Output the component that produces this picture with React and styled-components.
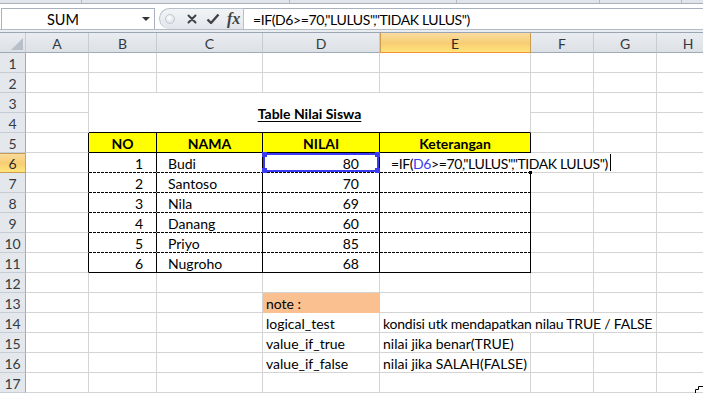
import styled, { createGlobalStyle, css } from "styled-components";

const GlobalStyle = createGlobalStyle`
  html, body {
    margin: 0;
    padding: 0;
    background: #fff;
  }
  body {
    font-family: Lato, "Liberation Sans", sans-serif;
    overflow: hidden;
  }
`;

const COLUMNS = [
  { key: "A", width: 63 },
  { key: "B", width: 68 },
  { key: "C", width: 106 },
  { key: "D", width: 117 },
  { key: "E", width: 151 },
  { key: "F", width: 63 },
  { key: "G", width: 63 },
  { key: "H", width: 63 },
];

const ROW_COUNT = 17;

const students = [
  { no: 1, name: "Budi", score: 80 },
  { no: 2, name: "Santoso", score: 70 },
  { no: 3, name: "Nila", score: 69 },
  { no: 4, name: "Danang", score: 60 },
  { no: 5, name: "Priyo", score: 85 },
  { no: 6, name: "Nugroho", score: 68 },
];

const notes = [
  ["logical_test", "kondisi utk mendapatkan nilau TRUE / FALSE"],
  ["value_if_true", "nilai jika benar(TRUE)"],
  ["value_if_false", "nilai jika SALAH(FALSE)"],
];

const ribbonGroups = [82, 208, 167, 143, 82, 30];

const GRID = "#d4d4d4";
const NOTE_FILL = "#fac090";

// works out borders, text and fill for every cell of a row
function cellsFor(row) {
  let cells = COLUMNS.map((col) => ({
    key: col.key + row,
    right: "grid",
    bottom: "grid",
  }));

  if (row >= 5 && row <= 11) {
    cells[0].right = "solid";
    for (let c = 1; c <= 4; c++) {
      cells[c].right = "solid";
      cells[c].bottom = row === 5 || row === 11 ? "solid" : "dashed";
    }
  }

  if (row === 5) {
    ["NO", "NAMA", "NILAI", "Keterangan"].forEach((label, i) => {
      Object.assign(cells[i + 1], { text: label, align: "center", bold: true, bg: "#ffff00" });
    });
  }

  const student = students[row - 6];
  if (student) {
    Object.assign(cells[1], { text: student.no, align: "right", padR: 13 });
    Object.assign(cells[2], { text: student.name, padL: 11 });
    Object.assign(cells[3], { text: student.score, align: "right", padR: 20 });
  }

  if (row === 6) {
    cells[3].selected = true;
    cells[4].editing = true;
  }

  if (row === 13) {
    Object.assign(cells[3], { text: "note :", bg: NOTE_FILL, right: "fill", bottom: "fill" });
  }

  const note = notes[row - 14];
  if (note) {
    cells[3].text = note[0];
    cells[4].text = note[1];
  }
  if (row === 14) {
    cells[4].right = "hidden";
    cells[4].tight = true;
    cells[5].right = "hidden";
  }

  if (row === 3) {
    cells.splice(1, 4, {
      key: "B3",
      title: true,
      colSpan: 4,
      rowSpan: 2,
      right: "grid",
      bottom: "solid",
    });
  }
  if (row === 4) cells.splice(1, 4);

  return cells;
}

function lineColor(kind, bg) {
  if (kind === "solid") return "#000";
  if (kind === "fill") return bg;
  if (kind === "hidden" || kind === "dashed") return "transparent";
  return GRID;
}

function XIcon() {
  return (
    <svg width="10" height="10" viewBox="0 0 10 10">
      <path d="M1.5 1.5 L8.5 8.5 M8.5 1.5 L1.5 8.5" stroke="#3f4246" strokeWidth="2" strokeLinecap="round" />
    </svg>
  );
}

function CheckIcon() {
  return (
    <svg width="14" height="12" viewBox="0 0 14 12">
      <path d="M1.5 6.5 L5 10 L12.5 1.5" stroke="#3f4246" strokeWidth="2.4" fill="none" strokeLinejoin="round" />
    </svg>
  );
}

function CornerTriangle() {
  return (
    <svg width="12" height="12" viewBox="0 0 12 12">
      <polygon points="12,0 12,12 0,12" fill="#b9bfc8" />
    </svg>
  );
}

function PointerCorner() {
  return (
    <svg width="8" height="8" viewBox="0 0 8 8">
      <path d="M0.5 8 V4.5 H3.5 V1.5 H8" stroke="#000" strokeWidth="1" fill="none" />
    </svg>
  );
}

function CellContent({ cell }) {
  if (cell.title) return <Title>Table Nilai Siswa</Title>;
  if (cell.editing) {
    return (
      <EditText>
        =IF(<RefText>D6</RefText>&gt;=70,"LULUS","TIDAK LULUS")
        <Caret />
      </EditText>
    );
  }
  return cell.text ?? null;
}

export default function App() {
  const rows = Array.from({ length: ROW_COUNT }, (_, i) => i + 1);

  return (
    <>
      <GlobalStyle />
      <Window>
        <Ribbon>
          {ribbonGroups.map((w, i) => (
            <RibbonGroup key={i} $w={w} />
          ))}
        </Ribbon>

        <FormulaBar>
          <NameBox>
            <NameText>SUM</NameText>
            <DropArrow />
          </NameBox>
          <Tools>
            <Grip />
            <ToolButton $w={20}>
              <XIcon />
            </ToolButton>
            <ToolButton $w={22}>
              <CheckIcon />
            </ToolButton>
            <Fx>fx</Fx>
          </Tools>
          <FormulaInput>=IF(D6&gt;=70,"LULUS","TIDAK LULUS")</FormulaInput>
        </FormulaBar>
        <Splitter />

        <Sheet>
          <Corner>
            <CornerTriangle />
          </Corner>
          {COLUMNS.map((col) => (
            <ColHead key={col.key} $active={col.key === "E"}>
              {col.key}
            </ColHead>
          ))}

          {rows.map((row) => [
            <RowHead key={"h" + row} $active={row === 6}>
              {row}
            </RowHead>,
            ...cellsFor(row).map((cell) => (
              <Cell
                key={cell.key}
                $align={cell.align}
                $bold={cell.bold}
                $bg={cell.bg}
                $padL={cell.padL}
                $padR={cell.padR}
                $right={cell.right}
                $bottom={cell.bottom}
                $colSpan={cell.colSpan}
                $rowSpan={cell.rowSpan}
                $middle={cell.title}
                $tight={cell.tight}
              >
                <CellContent cell={cell} />
                {cell.selected && (
                  <RefBox>
                    <Handle $v="top" $h="left" />
                    <Handle $v="top" $h="right" />
                    <Handle $v="bottom" $h="left" />
                    <Handle $v="bottom" $h="right" />
                  </RefBox>
                )}
                {cell.editing && <FillHandle />}
              </Cell>
            )),
          ])}
        </Sheet>

        <Pointer>
          <PointerCorner />
        </Pointer>
      </Window>
    </>
  );
}

const Window = styled.div`
  position: relative;
  width: 703px;
  height: 393px;
  overflow: hidden;
  background: #fff;
  font-size: 14px;
  color: #000;
`;

const Ribbon = styled.div`
  box-sizing: border-box;
  display: flex;
  height: 4px;
  background: #e1e5ea;
  border-bottom: 1px solid #a9b1bb;
`;

const RibbonGroup = styled.div`
  box-sizing: border-box;
  flex: 0 0 ${({ $w }) => $w}px;
  border-right: 1px solid #b7bec7;
`;

const FormulaBar = styled.div`
  box-sizing: border-box;
  display: flex;
  align-items: stretch;
  height: 26px;
  padding: 4px 0 0 1px;
  background: #fff;
  border-bottom: 1px solid #b3bbc5;
  font-size: 14.5px;
`;

const NameBox = styled.div`
  box-sizing: border-box;
  display: flex;
  align-items: center;
  width: 154px;
  border: 1px solid #a8b2be;
  border-bottom: none;
  background: #fff;
`;

const NameText = styled.span`
  flex: 1;
  text-align: center;
  padding-left: 0;
  padding-right: 18px;
`;

const DropArrow = styled.span`
  width: 0;
  height: 0;
  margin-right: 4px;
  border-left: 4px solid transparent;
  border-right: 4px solid transparent;
  border-top: 4px solid #333;
`;

const Tools = styled.div`
  box-sizing: border-box;
  display: flex;
  align-items: center;
  width: 84px;
  margin-left: 4px;
  border: 1px solid #b8c0ca;
  border-right: none;
  border-bottom: none;
  border-radius: 11px 0 0 11px;
  background: linear-gradient(#f2f4f7, #e2e6eb);
`;

const Grip = styled.span`
  box-sizing: border-box;
  width: 10px;
  height: 10px;
  margin: 0 7px 0 5px;
  border-radius: 50%;
  border: 1px solid #c3c9d1;
  background: radial-gradient(circle at 40% 35%, #ffffff, #d3d8de);
`;

const ToolButton = styled.span`
  display: flex;
  align-items: center;
  justify-content: center;
  width: ${({ $w }) => $w}px;
`;

const Fx = styled.span`
  margin-left: 3px;
  font-family: "Liberation Serif", serif;
  font-style: italic;
  font-weight: 700;
  font-size: 16px;
  color: #3f4246;
`;

const FormulaInput = styled.div`
  flex: 1;
  display: flex;
  align-items: center;
  padding-left: 9px;
  border-left: 1px solid #b8c0ca;
  border-top: 1px solid #a8b2be;
  white-space: nowrap;
  font-size: 14px;
  letter-spacing: -0.4px;
`;

const Splitter = styled.div`
  box-sizing: border-box;
  height: 3px;
  background: #e9ecf0;
  border-bottom: 1px solid #9ba6b2;
`;

const Sheet = styled.div`
  display: grid;
  grid-template-columns: 26px ${COLUMNS.map((c) => c.width + "px").join(" ")};
  grid-auto-rows: 20px;
`;

const headerBase = css`
  box-sizing: border-box;
  display: flex;
  align-items: center;
  justify-content: center;
  color: #333a42;
  font-size: 14px;
`;

const activeHeader = css`
  background: linear-gradient(#f9dca0, #f7cd73 55%, #ffe57c);
  color: #2b2b2b;
`;

const Corner = styled.div`
  ${headerBase};
  align-items: flex-end;
  justify-content: flex-end;
  padding: 0 2px 2px 0;
  background: linear-gradient(#e9ecf0, #dde1e6);
  border-right: 1px solid #c5ccd4;
  border-bottom: 1px solid #9eaab6;
`;

const ColHead = styled.div`
  ${headerBase};
  padding-top: 1px;
  background: linear-gradient(#e9ecf0, #dde1e6);
  border-right: 1px solid #c5ccd4;
  border-bottom: 1px solid #9eaab6;
  ${({ $active }) =>
    $active &&
    css`
      ${activeHeader};
      border-right-color: #c99d52;
      border-bottom-color: #f29436;
      box-shadow: inset 1px 0 0 #c99d52;
    `}
`;

const RowHead = styled.div`
  ${headerBase};
  padding-top: 2px;
  background: #e4e8ed;
  border-right: 1px solid #9eaab6;
  border-bottom: 1px solid #c5ccd4;
  ${({ $active }) =>
    $active &&
    css`
      ${activeHeader};
      border-bottom-color: #c99d52;
      border-right-color: #f29436;
      box-shadow: inset 0 1px 0 #c99d52;
    `}
`;

const Cell = styled.div`
  box-sizing: border-box;
  position: relative;
  display: flex;
  align-items: ${({ $middle }) => ($middle ? "center" : "flex-end")};
  justify-content: ${({ $align }) =>
    $align === "right" ? "flex-end" : $align === "center" ? "center" : "flex-start"};
  padding: 0 ${({ $padR }) => $padR ?? 3}px 0 ${({ $padL }) => $padL ?? 3}px;
  line-height: 17px;
  white-space: nowrap;
  letter-spacing: ${({ $tight }) => ($tight ? "-0.2px" : "normal")};
  font-weight: ${({ $bold }) => ($bold ? 700 : 400)};
  background-color: ${({ $bg }) => $bg || "transparent"};
  border-right: 1px solid ${({ $right, $bg }) => lineColor($right, $bg)};
  border-bottom: 1px solid ${({ $bottom, $bg }) => lineColor($bottom, $bg)};
  grid-column: ${({ $colSpan }) => ($colSpan ? `span ${$colSpan}` : "auto")};
  grid-row: ${({ $rowSpan }) => ($rowSpan ? `span ${$rowSpan}` : "auto")};
  ${({ $bottom }) =>
    $bottom === "dashed" &&
    css`
      background-image: repeating-linear-gradient(to right, #000 0 3px, transparent 3px 4px);
      background-size: 100% 1px;
      background-position: left bottom;
      background-origin: border-box;
      background-repeat: no-repeat;
    `}
`;

const Title = styled.span`
  flex: 1;
  padding-top: 2px;
  text-align: center;
  font-weight: 700;
  text-decoration: underline;
  text-underline-offset: 2px;
`;

const EditText = styled.span`
  position: relative;
  z-index: 2;
  display: flex;
  align-items: flex-end;
  height: 19px;
  margin-left: 8px;
  padding-right: 2px;
  background: #fff;
  letter-spacing: -0.4px;
`;

const RefText = styled.span`
  color: #3b3bef;
`;

const Caret = styled.span`
  align-self: center;
  width: 1px;
  height: 17px;
  margin-left: 2px;
  background: #000;
`;

const RefBox = styled.div`
  position: absolute;
  inset: 0 0 0 0;
  border: 2px solid #3a3af2;
  pointer-events: none;
`;

const Handle = styled.span`
  position: absolute;
  width: 5px;
  height: 5px;
  background: #3a3af2;
  ${({ $v }) => ($v === "top" ? "top: -3px;" : "bottom: -3px;")}
  ${({ $h }) => ($h === "left" ? "left: -3px;" : "right: -3px;")}
`;

const FillHandle = styled.span`
  position: absolute;
  right: -2px;
  bottom: -2px;
  z-index: 3;
  width: 3px;
  height: 3px;
  background: #000;
`;

const Pointer = styled.div`
  position: absolute;
  right: 0;
  bottom: 0;
  width: 8px;
  height: 8px;
  display: flex;
`;
